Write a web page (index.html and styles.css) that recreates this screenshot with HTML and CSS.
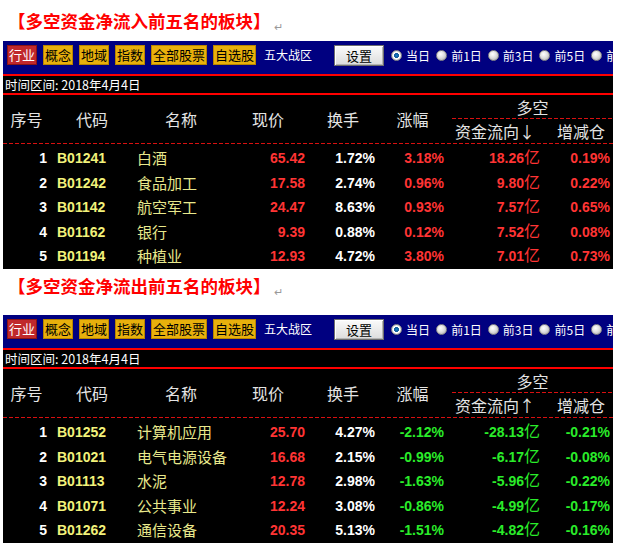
FILE: index.html
```html
<!DOCTYPE html>
<html lang="zh">
<head>
<meta charset="utf-8">
<link rel="stylesheet" href="styles.css">
</head>
<body>
<div class="title">【多空资金净流入前五名的板块】<span class="eol">↵</span></div>
<div class="panel">
  <div class="toolbar">
    <span class="btn btn-on">行业</span>
    <span class="btn">概念</span>
    <span class="btn">地域</span>
    <span class="btn">指数</span>
    <span class="btn">全部股票</span>
    <span class="btn">自选股</span>
    <span class="tlabel">五大战区</span>
    <span class="setbtn">设置</span>
    <div class="opts">
      <span class="opt"><i class="radio radio-on"></i>当日</span>
      <span class="opt"><i class="radio"></i>前1日</span>
      <span class="opt"><i class="radio"></i>前3日</span>
      <span class="opt"><i class="radio"></i>前5日</span>
      <span class="opt"><i class="radio"></i>前10日</span>
    </div>
  </div>
  <div class="redline"></div>
  <div class="band">时间区间: 2018年4月4日</div>
  <div class="redline"></div>
  <div class="table">
    <div class="head">
      <div class="h">序号</div>
      <div class="h">代码</div>
      <div class="h">名称</div>
      <div class="h">现价</div>
      <div class="h">换手</div>
      <div class="h">涨幅</div>
      <div class="dk">多空</div>
      <div class="sub sub-flow">资金流向↓</div>
      <div class="sub sub-pos">增减仓</div>
    </div>
    <div class="dash"></div>
    <div class="rows">
      <div class="row"><span class="c1">1</span><span class="c2">B01241</span><span class="c3">白酒</span><span class="c4">65.42</span><span class="c5">1.72%</span><span class="c6 up">3.18%</span><span class="c7 up">18.26<em>亿</em></span><span class="c8 up">0.19%</span></div>
      <div class="row"><span class="c1">2</span><span class="c2">B01242</span><span class="c3">食品加工</span><span class="c4">17.58</span><span class="c5">2.74%</span><span class="c6 up">0.96%</span><span class="c7 up">9.80<em>亿</em></span><span class="c8 up">0.22%</span></div>
      <div class="row"><span class="c1">3</span><span class="c2">B01142</span><span class="c3">航空军工</span><span class="c4">24.47</span><span class="c5">8.63%</span><span class="c6 up">0.93%</span><span class="c7 up">7.57<em>亿</em></span><span class="c8 up">0.65%</span></div>
      <div class="row"><span class="c1">4</span><span class="c2">B01162</span><span class="c3">银行</span><span class="c4">9.39</span><span class="c5">0.88%</span><span class="c6 up">0.12%</span><span class="c7 up">7.52<em>亿</em></span><span class="c8 up">0.08%</span></div>
      <div class="row"><span class="c1">5</span><span class="c2">B01194</span><span class="c3">种植业</span><span class="c4">12.93</span><span class="c5">4.72%</span><span class="c6 up">3.80%</span><span class="c7 up">7.01<em>亿</em></span><span class="c8 up">0.73%</span></div>
    </div>
  </div>
</div>

<div class="title title-second">【多空资金净流出前五名的板块】<span class="eol">↵</span></div>
<div class="panel">
  <div class="toolbar">
    <span class="btn btn-on">行业</span>
    <span class="btn">概念</span>
    <span class="btn">地域</span>
    <span class="btn">指数</span>
    <span class="btn">全部股票</span>
    <span class="btn">自选股</span>
    <span class="tlabel">五大战区</span>
    <span class="setbtn">设置</span>
    <div class="opts">
      <span class="opt"><i class="radio radio-on"></i>当日</span>
      <span class="opt"><i class="radio"></i>前1日</span>
      <span class="opt"><i class="radio"></i>前3日</span>
      <span class="opt"><i class="radio"></i>前5日</span>
      <span class="opt"><i class="radio"></i>前10日</span>
    </div>
  </div>
  <div class="redline"></div>
  <div class="band">时间区间: 2018年4月4日</div>
  <div class="redline"></div>
  <div class="table">
    <div class="head">
      <div class="h">序号</div>
      <div class="h">代码</div>
      <div class="h">名称</div>
      <div class="h">现价</div>
      <div class="h">换手</div>
      <div class="h">涨幅</div>
      <div class="dk">多空</div>
      <div class="sub sub-flow">资金流向↑</div>
      <div class="sub sub-pos">增减仓</div>
    </div>
    <div class="dash"></div>
    <div class="rows">
      <div class="row"><span class="c1">1</span><span class="c2">B01252</span><span class="c3">计算机应用</span><span class="c4">25.70</span><span class="c5">4.27%</span><span class="c6 down">-2.12%</span><span class="c7 down">-28.13<em>亿</em></span><span class="c8 down">-0.21%</span></div>
      <div class="row"><span class="c1">2</span><span class="c2">B01021</span><span class="c3">电气电源设备</span><span class="c4">16.68</span><span class="c5">2.15%</span><span class="c6 down">-0.99%</span><span class="c7 down">-6.17<em>亿</em></span><span class="c8 down">-0.08%</span></div>
      <div class="row"><span class="c1">3</span><span class="c2">B01113</span><span class="c3">水泥</span><span class="c4">12.78</span><span class="c5">2.98%</span><span class="c6 down">-1.63%</span><span class="c7 down">-5.96<em>亿</em></span><span class="c8 down">-0.22%</span></div>
      <div class="row"><span class="c1">4</span><span class="c2">B01071</span><span class="c3">公共事业</span><span class="c4">12.24</span><span class="c5">3.08%</span><span class="c6 down">-0.86%</span><span class="c7 down">-4.99<em>亿</em></span><span class="c8 down">-0.17%</span></div>
      <div class="row"><span class="c1">5</span><span class="c2">B01262</span><span class="c3">通信设备</span><span class="c4">20.35</span><span class="c5">5.13%</span><span class="c6 down">-1.51%</span><span class="c7 down">-4.82<em>亿</em></span><span class="c8 down">-0.16%</span></div>
    </div>
  </div>
</div>
</body>
</html>
```
FILE: styles.css
```css
body {
  margin: 0;
  background: #fff;
  font-family: "Noto Sans CJK SC", "Noto Sans", sans-serif;
}

.title {
  height: 41px;
  line-height: 42px;
  padding-left: 8px;
  color: #ff0000;
  font-weight: bold;
  font-size: 17.5px;
  white-space: nowrap;
}

.title-second {
  height: 46px;
  line-height: 34px;
}

.eol {
  font-size: 11px;
  font-weight: normal;
  color: #999;
  margin-left: 3px;
  vertical-align: -3px;
}

.panel {
  margin-left: 3px;
  width: 610px;
  overflow: hidden;
}

.toolbar {
  height: 33px;
  box-sizing: border-box;
  background: #000080;
  display: flex;
  align-items: flex-start;
  padding: 4px 0 0 4px;
  gap: 6px;
  white-space: nowrap;
}

.toolbar > * {
  flex-shrink: 0;
}

.btn {
  height: 20px;
  box-sizing: border-box;
  padding: 0 1px;
  font-size: 13px;
  line-height: 18px;
  background: #e8b00c;
  border: 1px solid #b88400;
  color: #000;
}

.btn-on {
  background: #c0282c;
  border-color: #8a1414;
  color: #fff;
}

.tlabel {
  margin-left: 2px;
  font-size: 12px;
  line-height: 20px;
  color: #fff;
}

.setbtn {
  margin-left: 16px;
  width: 50px;
  height: 21px;
  box-sizing: border-box;
  text-align: center;
  font-size: 13px;
  line-height: 19px;
  color: #000;
  background: linear-gradient(#fbfbfb, #dcdcdc);
  border: 1px solid #6e6e6e;
  box-shadow: inset 1px 1px 0 #fff, inset -1px -1px 0 #b4b4b4;
}

.opts {
  margin-left: 1px;
  display: flex;
  gap: 6px;
  height: 21px;
  align-items: center;
}

.opt {
  display: flex;
  align-items: center;
  gap: 4px;
  color: #fff;
  font-size: 12px;
  line-height: 20px;
  flex-shrink: 0;
}

.radio {
  width: 11px;
  height: 11px;
  flex-shrink: 0;
  box-sizing: border-box;
  border-radius: 50%;
  border: 1px solid #8c8c8c;
  background: radial-gradient(circle at 40% 35%, #ffffff 0, #e0e0e0 45%, #a8a8a8 100%);
}

.radio-on {
  background: radial-gradient(circle, #1b7fc4 0, #0e5a9c 2.2px, #ffffff 2.8px, #ffffff 3.4px, #c0c0c0 5px);
}

.redline {
  height: 2px;
  background: #ff0000;
}

.band {
  height: 17px;
  background: #000;
  color: #fff;
  font-size: 12.5px;
  line-height: 17px;
  padding-left: 2px;
  white-space: nowrap;
}

.table {
  background: #000;
  height: 174px;
}

.head {
  display: grid;
  grid-template-columns: 47px 84px 94px 80px 70px 69px 96px 70px;
  grid-template-rows: 24px 24px;
  height: 48px;
  color: #e4e4e4;
  font-size: 16px;
}

.h {
  grid-row: 1 / 3;
  display: flex;
  align-items: center;
  justify-content: center;
}

.dk {
  grid-column: 7 / 9;
  grid-row: 1;
  margin-left: 5px;
  display: flex;
  align-items: center;
  justify-content: center;
  background: repeating-linear-gradient(90deg, #d81010 0 4px, transparent 4px 6px) bottom / 100% 1px no-repeat;
}

.sub {
  grid-row: 2;
  display: flex;
  align-items: center;
  justify-content: center;
  white-space: nowrap;
}

.sub-flow {
  grid-column: 7;
}

.sub-pos {
  grid-column: 8;
  padding-left: 6px;
}

.dash {
  height: 1px;
  background: repeating-linear-gradient(90deg, #d81010 0 4px, transparent 4px 6px);
}

.rows {
  padding-top: 2px;
}

.row {
  display: grid;
  grid-template-columns: 47px 84px 94px 80px 70px 69px 96px 70px;
  height: 24.6px;
  line-height: 24.6px;
  font-family: "Liberation Sans", Arial, sans-serif;
  font-weight: bold;
  font-size: 14px;
  white-space: nowrap;
}

.row span {
  box-sizing: border-box;
}

.c1 {
  text-align: right;
  padding-right: 3px;
  color: #ffffff;
}

.c2 {
  padding-left: 7px;
  color: #f2f27a;
}

.c3 {
  padding-left: 3px;
  font-family: "Noto Sans CJK SC", sans-serif;
  font-weight: normal;
  font-size: 15px;
  color: #e8e88c;
}

.c4 {
  text-align: right;
  padding-right: 3px;
  color: #ff3434;
}

.c5 {
  text-align: right;
  padding-right: 3px;
  color: #ffffff;
}

.c6, .c7, .c8 {
  text-align: right;
  padding-right: 3px;
}

.up {
  color: #ff3434;
}

.down {
  color: #2aec2a;
}

.c7 em {
  font-style: normal;
  font-family: "Noto Sans CJK SC", sans-serif;
  font-weight: normal;
  font-size: 16px;
  line-height: 1;
}
```
